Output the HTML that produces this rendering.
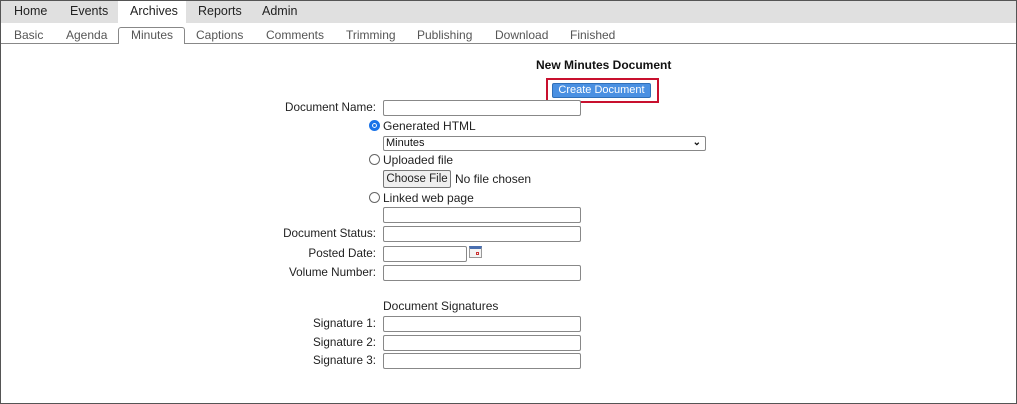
<!DOCTYPE html><html><head><style>
*{box-sizing:border-box}body{margin:0;width:1017px;height:404px;overflow:hidden;font-family:"Liberation Sans",Arial,sans-serif;font-size:12px;color:#222;background:#fff}
#f{position:absolute;left:0;top:0;width:1017px;height:404px;border:1px solid #555}
.a{position:absolute;white-space:nowrap}
.t{font-size:12.5px;color:#222}
.s{font-size:12px;color:#555}
.in{position:absolute;border:1px solid #888;border-radius:2px;background:#fff;height:16px}
.lb{position:absolute;right:640px;text-align:right;white-space:nowrap;font-size:11.7px}
.r{position:absolute;width:11px;height:11px;border:1px solid #666;border-radius:50%;background:#fff}
</style></head><body><div id="f">
<div class="a" style="left:0;top:0;width:1015px;height:22px;background:#e0e0e0"></div>
<div class="a" style="left:117px;top:0;width:68px;height:22px;background:#fff"></div>
<div class="a t" style="left:13px;top:3px">Home</div>
<div class="a t" style="left:69px;top:3px">Events</div>
<div class="a t" style="left:129px;top:3px">Archives</div>
<div class="a t" style="left:197px;top:3px">Reports</div>
<div class="a t" style="left:261px;top:3px">Admin</div>
<div class="a" style="left:0;top:42px;width:1015px;height:1px;background:#888"></div>
<div class="a" style="left:117px;top:26px;width:67px;height:17px;border:1px solid #888;border-bottom:none;border-radius:3px 3px 0 0;background:#fff"></div>
<div class="a s" style="left:13px;top:27px">Basic</div>
<div class="a s" style="left:65px;top:27px">Agenda</div>
<div class="a s" style="left:130px;top:27px">Minutes</div>
<div class="a s" style="left:195px;top:27px">Captions</div>
<div class="a s" style="left:265px;top:27px">Comments</div>
<div class="a s" style="left:345px;top:27px">Trimming</div>
<div class="a s" style="left:416px;top:27px">Publishing</div>
<div class="a s" style="left:494px;top:27px">Download</div>
<div class="a s" style="left:569px;top:27px">Finished</div>
<div class="a" style="left:535px;top:57px;font-weight:bold;font-size:12px;color:#111">New Minutes Document</div>
<div class="a" style="left:545px;top:77px;width:113px;height:25px;border:2px solid #c8102e"></div>
<div class="a" style="left:551px;top:82px;width:99px;height:15px;background:#4a90e2;border:1px solid #2f6fb8;border-radius:2px;color:#fff;font-size:11px;text-align:center;line-height:13px">Create Document</div>
<div class="lb" style="top:100px">Document Name:</div><div class="in" style="left:382px;top:99px;width:198px"></div>
<div class="r" style="left:368px;top:119px;border:3px solid #1a73e8;box-shadow:inset 0 0 0 1px #fff;background:#1a73e8"></div>
<div class="a" style="left:382px;top:118px">Generated HTML</div>
<div class="in" style="left:382px;top:135px;width:323px;height:15px;font-size:11px;padding-left:2px;line-height:13px;color:#111">Minutes<span style="position:absolute;right:4px;top:-1px;font-size:10px;font-weight:bold">&#8964;</span></div>
<div class="r" style="left:368px;top:153px"></div>
<div class="a" style="left:382px;top:152px">Uploaded file</div>
<div class="a" style="left:382px;top:169px;width:68px;height:18px;border:1px solid #777;border-radius:2px;background:#efefef;text-align:center;line-height:16px;font-size:11.5px">Choose File</div>
<div class="a" style="left:454px;top:171px">No file chosen</div>
<div class="r" style="left:368px;top:191px"></div>
<div class="a" style="left:382px;top:190px">Linked web page</div>
<div class="in" style="left:382px;top:206px;width:198px"></div>
<div class="lb" style="top:226px">Document Status:</div><div class="in" style="left:382px;top:225px;width:198px"></div>
<div class="lb" style="top:246px">Posted Date:</div><div class="in" style="left:382px;top:245px;width:84px"></div>
<div class="a" style="left:468px;top:245px;width:13px;height:12px;border:1px solid #999;background:#f4f4f4;border-top:3px solid #4a6fb0"><div style="position:absolute;right:2px;top:3px;width:3px;height:3px;border:1px solid #c33"></div></div>
<div class="lb" style="top:265px">Volume Number:</div><div class="in" style="left:382px;top:264px;width:198px"></div>
<div class="a" style="left:382px;top:298px">Document Signatures</div>
<div class="lb" style="top:316px">Signature 1:</div><div class="in" style="left:382px;top:315px;width:198px"></div>
<div class="lb" style="top:335px">Signature 2:</div><div class="in" style="left:382px;top:334px;width:198px"></div>
<div class="lb" style="top:353px">Signature 3:</div><div class="in" style="left:382px;top:352px;width:198px"></div>
</div></body></html>
